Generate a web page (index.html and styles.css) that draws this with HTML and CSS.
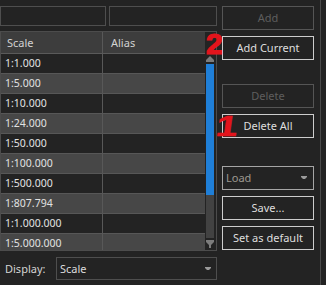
FILE: index.html
```html
<!DOCTYPE html>
<html>
<head>
    <meta charset="utf-8" />
    <title>Scales</title>
    <link rel="stylesheet" href="styles.css">
</head>
<body>
    <div class="window">
        <div class="main">
            <div class="filters">
                <div class="field first"></div>
                <div class="field second"></div>
            </div>
            <div class="grid">
                <div class="list">
                    <div class="row head"><div class="cell scale">Scale</div><div class="cell alias">Alias</div></div>
                    <div class="row"><div class="cell scale">1:1.000</div><div class="cell alias"></div></div>
                    <div class="row alt"><div class="cell scale">1:5.000</div><div class="cell alias"></div></div>
                    <div class="row"><div class="cell scale">1:10.000</div><div class="cell alias"></div></div>
                    <div class="row alt"><div class="cell scale">1:24.000</div><div class="cell alias"></div></div>
                    <div class="row"><div class="cell scale">1:50.000</div><div class="cell alias"></div></div>
                    <div class="row alt"><div class="cell scale">1:100.000</div><div class="cell alias"></div></div>
                    <div class="row"><div class="cell scale">1:500.000</div><div class="cell alias"></div></div>
                    <div class="row alt"><div class="cell scale">1:807.794</div><div class="cell alias"></div></div>
                    <div class="row"><div class="cell scale">1:1.000.000</div><div class="cell alias"></div></div>
                    <div class="row alt"><div class="cell scale">1:5.000.000</div><div class="cell alias"></div></div>
                </div>
                <div class="scroll">
                    <svg class="arrow" width="8" height="6" viewBox="0 0 8 6"><polygon points="4,0 8,4 8,6 0,6 0,4" fill="#7c7c7c"/></svg>
                    <div class="thumb"></div>
                    <div class="track"></div>
                    <svg class="arrow" width="8" height="8" viewBox="0 0 8 8"><polygon points="0,0 8,0 8,2 5,5 5,8 3,8 3,5 0,2" fill="#7c7c7c"/></svg>
                </div>
            </div>
            <div class="display">
                <span class="label">Display:</span>
                <div class="combo">
                    <span>Scale</span>
                    <svg width="6" height="4" viewBox="0 0 6 4"><polygon points="0,0 6,0 6,1 4,3 2,3 0,1" fill="#9a9a9a"/></svg>
                </div>
            </div>
        </div>
        <div class="side">
            <div class="btn disabled">Add</div>
            <div class="btn gap-s">Add Current</div>
            <div class="btn disabled gap-l">Delete</div>
            <div class="btn gap-s">Delete All</div>
            <div class="btn combo-btn gap-xl">
                <span>Load</span>
                <svg width="6" height="4" viewBox="0 0 6 4"><polygon points="0,0 6,0 6,1 4,3 2,3 0,1" fill="#9a9a9a"/></svg>
            </div>
            <div class="btn gap-s">Save...</div>
            <div class="btn gap-s">Set as default</div>
        </div>
        <div class="divider"></div>

        <span class="mark two">2</span>
        <span class="mark one">1</span>
    </div>
</body>
</html>
```

FILE: styles.css
```css
* {
    margin: 0;
    padding: 0;
    box-sizing: border-box;
}

html,
body {
    width: 326px;
    height: 285px;
    overflow: hidden;
}

body {
    background: #232323;
    color: #dcdcdc;
    font-family: 'Noto Sans', 'DejaVu Sans', sans-serif;
    font-size: 11px;
    line-height: 1.2;
}

.window {
    position: relative;
    display: flex;
    height: 285px;
}

/* left part: filters, list, display */

.main {
    width: 217px;
    display: flex;
    flex-direction: column;
}

.filters {
    display: flex;
    gap: 3px;
    margin-top: 6px;
    height: 20px;
}

.field {
    border: 1px solid #4e4e4e;
    height: 100%;
}

.field.first {
    width: 106px;
}

.field.second {
    width: 108px;
}

.grid {
    display: flex;
    margin-top: 5px;
    height: 220px;
    border: 1px solid #4c4c4c;
    overflow: hidden;
}

.list {
    width: 204px;
}

.row {
    display: flex;
    height: 20px;
    border-bottom: 1px solid #575757;
    font-size: 10.5px;
    color: #e2e2e2;
}

.row.alt {
    background: #474747;
}

.row.head {
    height: 22px;
    background: #3d3d3d;
    border-bottom-color: #5a5a5a;
    font-size: 11px;
    color: #d2d2d2;
}

.cell {
    display: flex;
    align-items: center;
}

.cell.scale {
    width: 102px;
    padding-left: 4px;
    border-right: 1px solid #585858;
}

.row.head .cell.scale {
    padding-left: 6px;
}

.cell.alias {
    flex: 1;
    padding-left: 8px;
}

.scroll {
    width: 11px;
    display: flex;
    flex-direction: column;
    align-items: flex-start;
    padding: 24px 0 2px 1px;
}

.scroll .arrow {
    display: block;
}

.thumb {
    width: 8px;
    height: 131px;
    margin-top: 2px;
    background: #1f7fd8;
}

.track {
    width: 8px;
    flex: 1;
    background: #424242;
    margin-bottom: 2px;
}

.display {
    display: flex;
    align-items: center;
    margin-top: 6px;
    height: 23px;
}

.label {
    width: 56px;
    padding-left: 5px;
    color: #d4d4d4;
}

.combo {
    flex: 1;
    height: 100%;
    border: 1px solid #4e4e4e;
    display: flex;
    align-items: center;
    justify-content: space-between;
    padding: 0 5px 0 3px;
}

/* right part: buttons */

.side {
    width: 92px;
    margin-left: 5px;
    padding-top: 6px;
    display: flex;
    flex-direction: column;
}

.btn {
    height: 24px;
    border: 1px solid #cdcdcd;
    display: flex;
    align-items: center;
    justify-content: center;
    color: #dedede;
}

.btn.disabled {
    border-color: #555;
    color: #5e5e5e;
}

.gap-s {
    margin-top: 6px;
}

.gap-l {
    margin-top: 24px;
}

.gap-xl {
    margin-top: 28px;
}

.combo-btn {
    justify-content: space-between;
    padding: 0 6px 0 3px;
    border-color: #a5a5a5;
    color: #9c9890;
}

.divider {
    width: 1px;
    margin-left: 6px;
    background: #4a4a4a;
}

/* red hand annotations */

.mark {
    position: absolute;
    color: #e3141c;
    font-family: 'Liberation Sans', sans-serif;
    font-weight: bold;
    -webkit-text-stroke: 1.2px #e3141c;
}

.mark.two {
    left: 206px;
    top: 29px;
    font-size: 30px;
    line-height: 30px;
}

.mark.one {
    left: 219px;
    top: 112px;
    font-size: 29px;
    line-height: 29px;
    transform: scaleX(1.35) skewX(-6deg);
    -webkit-text-stroke: 0.4px #e3141c;
}
```
